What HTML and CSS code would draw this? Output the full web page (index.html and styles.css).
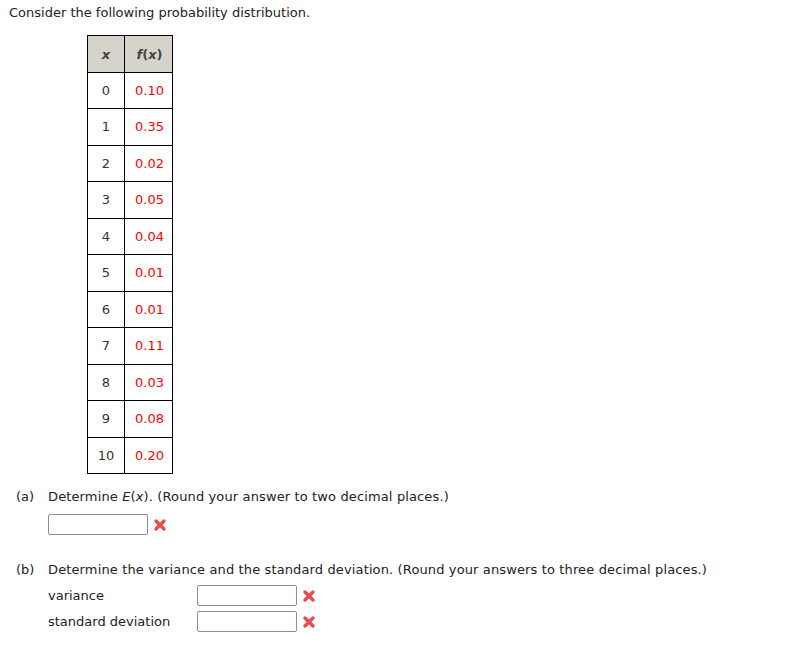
FILE: index.html
```html
<!DOCTYPE html>
<html>
<head>
<meta charset="utf-8">
<link rel="stylesheet" href="styles.css">
</head>
<body>
<div class="page">
  <p class="intro">Consider the following probability distribution.</p>
  <table class="dist">
    <tr class="head"><th class="c1"><i>x</i></th><th class="c2"><i>f</i>(<i>x</i>)</th></tr>
    <tr><td class="c1">0</td><td class="c2">0.10</td></tr>
    <tr><td class="c1">1</td><td class="c2">0.35</td></tr>
    <tr><td class="c1">2</td><td class="c2">0.02</td></tr>
    <tr><td class="c1">3</td><td class="c2">0.05</td></tr>
    <tr><td class="c1">4</td><td class="c2">0.04</td></tr>
    <tr><td class="c1">5</td><td class="c2">0.01</td></tr>
    <tr><td class="c1">6</td><td class="c2">0.01</td></tr>
    <tr><td class="c1">7</td><td class="c2">0.11</td></tr>
    <tr><td class="c1">8</td><td class="c2">0.03</td></tr>
    <tr><td class="c1">9</td><td class="c2">0.08</td></tr>
    <tr><td class="c1">10</td><td class="c2">0.20</td></tr>
  </table>

  <div class="part part-a">
    <div class="qline"><span class="lbl">(a)</span><span>Determine <i>E</i>(<i>x</i>). (Round your answer to two decimal places.)</span></div>
    <div class="ansrow indent">
      <span class="box"></span>
      <svg class="wrong" width="14" height="14" viewBox="0 0 14 14"><path d="M3 3 L11 11 M11 3 L3 11" stroke="#ec4a4a" stroke-width="3.4" stroke-linecap="round"/></svg>
    </div>
  </div>

  <div class="part part-b">
    <div class="qline"><span class="lbl">(b)</span><span>Determine the variance and the standard deviation. (Round your answers to three decimal places.)</span></div>
    <div class="grid indent">
      <span class="name">variance</span>
      <span class="ansrow"><span class="box"></span><svg class="wrong" width="14" height="14" viewBox="0 0 14 14"><path d="M3 3 L11 11 M11 3 L3 11" stroke="#ec4a4a" stroke-width="3.4" stroke-linecap="round"/></svg></span>
      <span class="name">standard deviation</span>
      <span class="ansrow"><span class="box"></span><svg class="wrong" width="14" height="14" viewBox="0 0 14 14"><path d="M3 3 L11 11 M11 3 L3 11" stroke="#ec4a4a" stroke-width="3.4" stroke-linecap="round"/></svg></span>
    </div>
  </div>
</div>
</body>
</html>
```

FILE: styles.css
```css
html, body {
  margin: 0;
  padding: 0;
  background: #fff;
}
body {
  font-family: "DejaVu Sans", Verdana, sans-serif;
  font-size: 13px;
  color: #222;
}
.page {
  padding: 5px 0 0 9px;
}
.intro {
  margin: 0;
  line-height: 16px;
}
.dist {
  border-collapse: collapse;
  margin: 14px 0 0 78px;
  font-size: 13px;
}
.dist th, .dist td {
  border: 1px solid #000;
  text-align: center;
  padding: 0;
  height: 35.5px;
}
.dist .c1 { width: 36px; }
.dist .c2 { width: 45px; padding-left: 2px; }
.dist th {
  background: #d6d3ca;
  color: #444;
  font-weight: bold;
  padding-top: 1px;
  height: 34.5px;
}
.dist td.c1 { color: #333; }
.dist td.c2 { color: #f00; }
.part-a { margin-top: 15px; }
.part-b { margin-top: 27px; }
.qline {
  display: flex;
  line-height: 16px;
  padding-left: 7px;
  letter-spacing: 0.13px;
}
.lbl { width: 32px; letter-spacing: 0; }
.indent { margin-left: 39px; }
.ansrow {
  display: flex;
  align-items: center;
  gap: 5px;
}
.part-a .ansrow { margin-top: 9px; }
.box {
  display: inline-block;
  width: 98px;
  height: 19px;
  border: 1px solid #8c8c99;
  border-radius: 2px;
  background: #fff;
}
.wrong { display: block; }
.grid {
  display: grid;
  grid-template-columns: 149px auto;
  row-gap: 5px;
  align-items: center;
  margin-top: 7px;
}
```
